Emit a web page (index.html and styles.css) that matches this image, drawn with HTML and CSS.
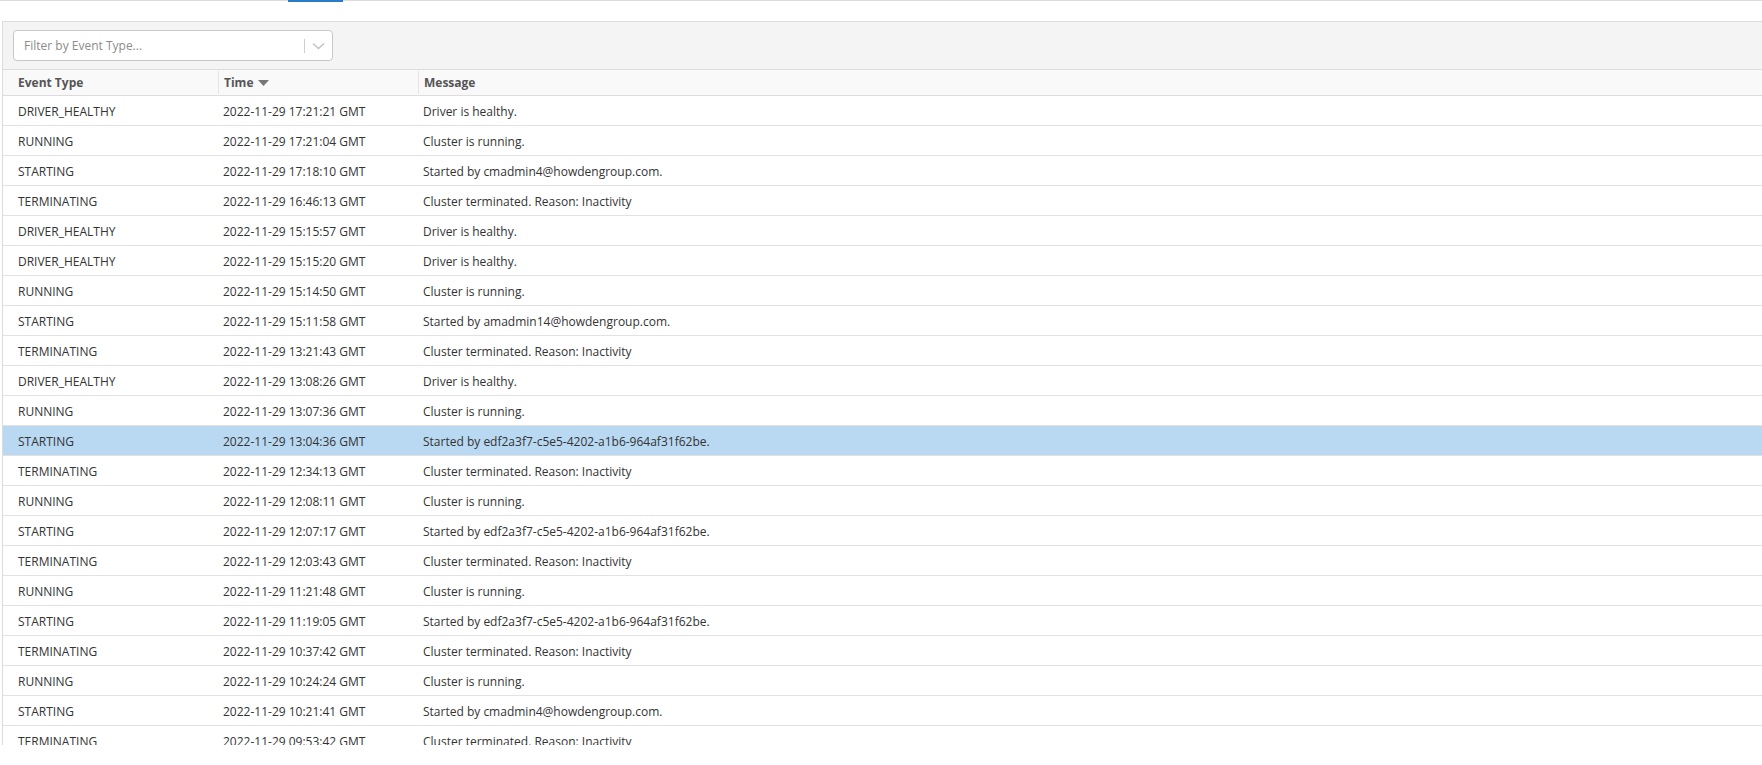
FILE: index.html
```html
<!DOCTYPE html>
<html>
<head>
<meta charset="utf-8">
<link rel="stylesheet" href="styles.css">
</head>
<body>
<div class="tabbar"><div class="tab-active"></div></div>
<div class="panel">
  <div class="toolbar">
    <div class="select">
      <span class="placeholder">Filter by Event Type...</span>
      <span class="sep"></span>
      <svg class="chev" width="13" height="8" viewBox="0 0 13 8"><path d="M1 1.5 L6.5 6.5 L12 1.5" fill="none" stroke="#c4c4c4" stroke-width="1.6"/></svg>
    </div>
  </div>
  <div class="grid">
    <div class="head">
      <div class="hc c1">Event Type</div>
      <div class="hc c2">Time <svg class="sort" width="11" height="6" viewBox="0 0 11 6"><path d="M0 0 H11 L5.5 6 Z" fill="#777"/></svg></div>
      <div class="hc c3">Message</div>
    </div>
    <div class="body">
      <div class="row"><div class="c c1">DRIVER_HEALTHY</div><div class="c c2">2022-11-29 17:21:21 GMT</div><div class="c c3">Driver is healthy.</div></div>
      <div class="row"><div class="c c1">RUNNING</div><div class="c c2">2022-11-29 17:21:04 GMT</div><div class="c c3">Cluster is running.</div></div>
      <div class="row"><div class="c c1">STARTING</div><div class="c c2">2022-11-29 17:18:10 GMT</div><div class="c c3">Started by cmadmin4@howdengroup.com.</div></div>
      <div class="row"><div class="c c1">TERMINATING</div><div class="c c2">2022-11-29 16:46:13 GMT</div><div class="c c3">Cluster terminated. Reason: Inactivity</div></div>
      <div class="row"><div class="c c1">DRIVER_HEALTHY</div><div class="c c2">2022-11-29 15:15:57 GMT</div><div class="c c3">Driver is healthy.</div></div>
      <div class="row"><div class="c c1">DRIVER_HEALTHY</div><div class="c c2">2022-11-29 15:15:20 GMT</div><div class="c c3">Driver is healthy.</div></div>
      <div class="row"><div class="c c1">RUNNING</div><div class="c c2">2022-11-29 15:14:50 GMT</div><div class="c c3">Cluster is running.</div></div>
      <div class="row"><div class="c c1">STARTING</div><div class="c c2">2022-11-29 15:11:58 GMT</div><div class="c c3">Started by amadmin14@howdengroup.com.</div></div>
      <div class="row"><div class="c c1">TERMINATING</div><div class="c c2">2022-11-29 13:21:43 GMT</div><div class="c c3">Cluster terminated. Reason: Inactivity</div></div>
      <div class="row"><div class="c c1">DRIVER_HEALTHY</div><div class="c c2">2022-11-29 13:08:26 GMT</div><div class="c c3">Driver is healthy.</div></div>
      <div class="row"><div class="c c1">RUNNING</div><div class="c c2">2022-11-29 13:07:36 GMT</div><div class="c c3">Cluster is running.</div></div>
      <div class="row selected"><div class="c c1">STARTING</div><div class="c c2">2022-11-29 13:04:36 GMT</div><div class="c c3">Started by edf2a3f7-c5e5-4202-a1b6-964af31f62be.</div></div>
      <div class="row"><div class="c c1">TERMINATING</div><div class="c c2">2022-11-29 12:34:13 GMT</div><div class="c c3">Cluster terminated. Reason: Inactivity</div></div>
      <div class="row"><div class="c c1">RUNNING</div><div class="c c2">2022-11-29 12:08:11 GMT</div><div class="c c3">Cluster is running.</div></div>
      <div class="row"><div class="c c1">STARTING</div><div class="c c2">2022-11-29 12:07:17 GMT</div><div class="c c3">Started by edf2a3f7-c5e5-4202-a1b6-964af31f62be.</div></div>
      <div class="row"><div class="c c1">TERMINATING</div><div class="c c2">2022-11-29 12:03:43 GMT</div><div class="c c3">Cluster terminated. Reason: Inactivity</div></div>
      <div class="row"><div class="c c1">RUNNING</div><div class="c c2">2022-11-29 11:21:48 GMT</div><div class="c c3">Cluster is running.</div></div>
      <div class="row"><div class="c c1">STARTING</div><div class="c c2">2022-11-29 11:19:05 GMT</div><div class="c c3">Started by edf2a3f7-c5e5-4202-a1b6-964af31f62be.</div></div>
      <div class="row"><div class="c c1">TERMINATING</div><div class="c c2">2022-11-29 10:37:42 GMT</div><div class="c c3">Cluster terminated. Reason: Inactivity</div></div>
      <div class="row"><div class="c c1">RUNNING</div><div class="c c2">2022-11-29 10:24:24 GMT</div><div class="c c3">Cluster is running.</div></div>
      <div class="row"><div class="c c1">STARTING</div><div class="c c2">2022-11-29 10:21:41 GMT</div><div class="c c3">Started by cmadmin4@howdengroup.com.</div></div>
      <div class="row"><div class="c c1">TERMINATING</div><div class="c c2">2022-11-29 09:53:42 GMT</div><div class="c c3">Cluster terminated. Reason: Inactivity</div></div>
    </div>
  </div>
</div>
</body>
</html>
```

FILE: styles.css
```css
html, body {
  margin: 0;
  padding: 0;
  background: #fff;
  height: 765px;
  overflow: hidden;
  font-family: "Open Sans", "Noto Sans", sans-serif;
  font-size: 12px;
  color: #333;
}

.tabbar {
  display: flex;
  height: 1px;
  background: #dcdcdc;
}
.tab-active {
  margin-left: 288px;
  width: 55px;
  height: 2px;
  background: #2a7bc8;
}

.panel {
  margin-top: 20px;
  margin-left: 2px;
  border-left: 1px solid #dcdcdc;
  border-top: 1px solid #dcdcdc;
  background: #f4f4f4;
}

.toolbar {
  padding: 8px 10px 8px 10px;
}

.select {
  box-sizing: border-box;
  width: 320px;
  height: 31px;
  background: #fff;
  border: 1px solid #c8c8c8;
  border-radius: 4px;
  display: flex;
  align-items: center;
}
.placeholder {
  flex: 1;
  padding-left: 10px;
  color: #8c8c8c;
  font-size: 12px;
}
.sep {
  width: 1px;
  height: 14px;
  background: #cfcfcf;
}
.chev {
  margin: 0 7px 0 7px;
}

.grid {
  background: #fff;
  height: 676px;
  overflow: hidden;
}

.head {
  display: flex;
  height: 25px;
  background: #f9f9f9;
  border-top: 1px solid #dcdcdc;
  border-bottom: 1px solid #dcdcdc;
}
.hc {
  display: flex;
  align-items: center;
  font-weight: 700;
  color: #555;
  box-sizing: border-box;
}
.hc.c2, .hc.c3 {
  border-left: 1px solid #e4e4e4;
  margin: 1px 0;
}
.sort {
  margin-left: 5px;
  margin-top: 1px;
}

.c1 { width: 215px; padding-left: 15px; box-sizing: border-box; flex: none; }
.c2 { width: 200px; padding-left: 5px; box-sizing: border-box; flex: none; }
.c3 { flex: 1; padding-left: 5px; }

.row {
  display: flex;
  align-items: center;
  height: 27px;
  padding-top: 2px;
  border-bottom: 1px solid #e2e2e2;
}
.row.selected {
  background: #b9d8f2;
}
.c {
  white-space: nowrap;
}
```
